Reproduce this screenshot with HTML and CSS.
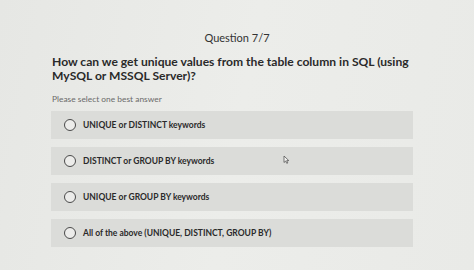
FILE: index.html
```html
<!DOCTYPE html>
<html>
<head>
<meta charset="utf-8">
<link rel="stylesheet" href="styles.css">
</head>
<body>
<main class="page">
  <div class="counter">Question 7/7</div>
  <h1 class="question">How can we get unique values from the table column in SQL (using MySQL or MSSQL Server)?</h1>
  <div class="hint">Please select one best answer</div>
  <ul class="options">
    <li class="option"><span class="radio"></span><span class="label">UNIQUE or DISTINCT keywords</span></li>
    <li class="option"><span class="radio"></span><span class="label">DISTINCT or GROUP BY keywords</span>
      <svg class="cursor" width="7" height="9" viewBox="0 0 7 9"><path d="M1 1 L1 7.5 L2.6 6 L3.8 8.4 L4.8 7.9 L3.7 5.6 L5.8 5.6 Z" fill="#f4f4f2" stroke="#555" stroke-width="0.8" stroke-linejoin="round"/></svg>
    </li>
    <li class="option"><span class="radio"></span><span class="label">UNIQUE or GROUP BY keywords</span></li>
    <li class="option"><span class="radio"></span><span class="label">All of the above (UNIQUE, DISTINCT, GROUP BY)</span></li>
  </ul>
</main>
</body>
</html>
```
FILE: styles.css
```css
html, body {
  margin: 0;
  padding: 0;
}
body {
  width: 474px;
  height: 270px;
  overflow: hidden;
  background: linear-gradient(100deg, #e6e7e4 0%, #ecedea 50%, #e9eae7 100%);
  font-family: "Lato", "Open Sans", sans-serif;
  color: #2b2b2b;
}
.page {
  padding: 31px 61px 0 51px;
}
.counter {
  text-align: center;
  font-size: 11px;
  line-height: 14px;
  color: #333;
  padding-left: 10px;
}
.question {
  margin: 10px 0 0 1px;
  font-size: 12.1px;
  line-height: 14px;
  font-weight: 700;
  color: #2a2a2a;
}
.hint {
  margin: 11px 0 0 1px;
  font-size: 8.4px;
  line-height: 10px;
  color: #6a6a6a;
}
.options {
  list-style: none;
  margin: 7px 0 0 0;
  padding: 0;
  display: flex;
  flex-direction: column;
  gap: 8px;
}
.option {
  position: relative;
  height: 28px;
  background: #dbdcd9;
  display: flex;
  align-items: center;
  padding-left: 13px;
}
.radio {
  width: 10px;
  height: 10px;
  border: 1.5px solid #4a4a4a;
  border-radius: 50%;
  background: #ececea;
  flex: none;
}
.label {
  margin-left: 7px;
  font-size: 8.5px;
  font-weight: 700;
  color: #2a2a2a;
}
.cursor {
  position: absolute;
  left: 232px;
  top: 8px;
}
```
